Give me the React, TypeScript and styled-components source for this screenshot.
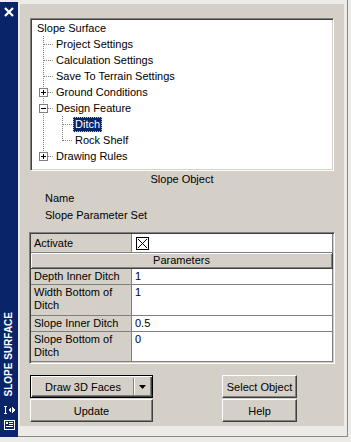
import React from 'react';
import styled, { createGlobalStyle } from 'styled-components';

const GlobalStyle = createGlobalStyle`
  html, body {
    margin: 0;
    padding: 0;
    background: #ecebe8;
  }
  body {
    font-family: 'Liberation Sans', Arial, sans-serif;
    font-size: 11px;
    color: #000;
  }
`;

const Window = styled.div`
  display: flex;
  width: 351px;
  height: 442px;
  background: #ecebe8;
  overflow: hidden;
`;

const Sidebar = styled.div`
  width: 18px;
  height: 435px;
  margin-top: 2px;
  padding: 3px 0 7px;
  box-sizing: border-box;
  background: #0a246a;
  display: flex;
  flex-direction: column;
  align-items: center;
`;

const Spacer = styled.div`
  flex: 1;
`;

const SideTitle = styled.div`
  writing-mode: vertical-rl;
  transform: rotate(180deg);
  color: #fff;
  font-weight: bold;
  font-size: 10px;
  line-height: 12px;
  margin-bottom: 9px;
`;

const SideIcon = styled.svg<{ $gap?: number }>`
  display: block;
  margin-top: ${(p) => p.$gap ?? 0}px;
`;

const Frame = styled.div`
  width: 330px;
  height: 437px;
  box-sizing: border-box;
  padding: 4px 3px 10px 2px;
  border-right: 1px solid #8a8986;
  border-bottom: 1px solid #8a8986;
  display: flex;
`;

const Panel = styled.div`
  flex: 1;
  background: #d4d0c8;
  display: flex;
  flex-direction: column;
`;

const TreeBox = styled.div`
  margin: 14px 0 0 10px;
  width: 304px;
  height: 153px;
  box-sizing: border-box;
  background: #fff;
  border: 1px solid;
  border-color: #808080 #fff #fff #808080;
  box-shadow: inset 1px 1px 0 #404040, inset -1px -1px 0 #d4d0c8;
  padding: 1px 0 0 4px;
  overflow: hidden;
`;

const TreeRow = styled.div`
  display: flex;
  align-items: center;
  height: 16px;
`;

const GuideSvg = styled.svg`
  display: block;
  flex: none;
`;

const TreeLabel = styled.span<{ $selected?: boolean }>`
  padding: 0 1px;
  line-height: 13px;
  border: 1px dotted ${(p) => (p.$selected ? '#c9c27a' : 'transparent')};
  background: ${(p) => (p.$selected ? '#0a246a' : 'transparent')};
  color: ${(p) => (p.$selected ? '#fff' : '#000')};
  white-space: nowrap;
`;

const Caption = styled.div<{ $center?: boolean; $top?: number }>`
  height: 16px;
  line-height: 16px;
  margin-top: ${(p) => p.$top ?? 0}px;
  padding-left: ${(p) => (p.$center ? 0 : 25)}px;
  text-align: ${(p) => (p.$center ? 'center' : 'left')};
`;

const Grid = styled.div`
  margin: 9px 0 0 9px;
  width: 306px;
  height: 132px;
  box-sizing: border-box;
  border: 1px solid;
  border-color: #808080 #fff #fff #808080;
  box-shadow: inset 1px 1px 0 #404040, inset -1px -1px 0 #d4d0c8;
  padding: 1px;
  display: flex;
  flex-direction: column;
  overflow: hidden;
`;

const GridRow = styled.div<{ $h?: number }>`
  display: grid;
  grid-template-columns: 101px 1fr;
  height: ${(p) => (p.$h ? `${p.$h}px` : 'auto')};
  flex: ${(p) => (p.$h ? 'none' : 1)};
  box-sizing: border-box;
  border-bottom: 1px solid #808080;
`;

const LabelCell = styled.div<{ $middle?: boolean }>`
  background: #d4d0c8;
  border-right: 1px solid #808080;
  padding: 1px 3px;
  line-height: 13px;
  display: flex;
  align-items: ${(p) => (p.$middle ? 'center' : 'flex-start')};
`;

const ValueCell = styled.div<{ $middle?: boolean }>`
  background: #fff;
  border-right: 1px solid #808080;
  padding: 1px 3px;
  line-height: 13px;
  display: flex;
  align-items: ${(p) => (p.$middle ? 'center' : 'flex-start')};
`;

const SectionRow = styled.div`
  height: 16px;
  flex: none;
  box-sizing: border-box;
  background: #d4d0c8;
  border-right: 1px solid #404040;
  border-bottom: 1px solid #404040;
  box-shadow: inset 1px 1px 0 #fff, inset -1px -1px 0 #808080;
  text-align: center;
  line-height: 15px;
`;

const CheckSvg = styled.svg`
  display: block;
  margin-left: 1px;
`;

const Buttons = styled.div`
  display: grid;
  grid-template-columns: 123px 75px;
  column-gap: 69px;
  row-gap: 1px;
  margin: 11px 0 0 10px;
`;

const Button = styled.div<{ $default?: boolean }>`
  height: 23px;
  box-sizing: border-box;
  background: #d4d0c8;
  display: flex;
  align-items: center;
  justify-content: center;
  border: 1px solid;
  border-color: ${(p) => (p.$default ? '#000' : '#fff #404040 #404040 #fff')};
  box-shadow: ${(p) =>
    p.$default
      ? 'inset 1px 1px 0 #fff, inset -1px -1px 0 #404040, inset -2px -2px 0 #808080'
      : 'inset -1px -1px 0 #808080'};
`;

const SplitMain = styled.div`
  flex: 1;
  text-align: center;
  padding-left: 2px;
`;

const SplitArrow = styled.div`
  width: 16px;
  align-self: stretch;
  margin: 2px 2px 2px 0;
  border-left: 1px solid #808080;
  box-shadow: inset 1px 0 0 #fff;
  display: flex;
  align-items: center;
  justify-content: center;
`;

type Guide = { line: 'full' | 'half' | 'none'; branch?: boolean; toggle?: '+' | '-' };

type TreeItem = { label: string; guides: Guide[]; selected?: boolean };

const treeItems: TreeItem[] = [
  { label: 'Slope Surface', guides: [] },
  { label: 'Project Settings', guides: [{ line: 'full', branch: true }] },
  { label: 'Calculation Settings', guides: [{ line: 'full', branch: true }] },
  { label: 'Save To Terrain Settings', guides: [{ line: 'full', branch: true }] },
  { label: 'Ground Conditions', guides: [{ line: 'full', branch: true, toggle: '+' }] },
  { label: 'Design Feature', guides: [{ line: 'full', branch: true, toggle: '-' }] },
  {
    label: 'Ditch',
    guides: [{ line: 'full' }, { line: 'full', branch: true }],
    selected: true,
  },
  { label: 'Rock Shelf', guides: [{ line: 'full' }, { line: 'half', branch: true }] },
  { label: 'Drawing Rules', guides: [{ line: 'half', branch: true, toggle: '+' }] },
];

const GuideCell = ({ line, branch, toggle }: Guide) => (
  <GuideSvg width={19} height={16} viewBox="0 0 19 16" shapeRendering="crispEdges">
    {line !== 'none' && (
      <line
        x1={8.5}
        y1={0}
        x2={8.5}
        y2={line === 'full' ? 16 : 9}
        stroke="#808080"
        strokeDasharray="1 1"
      />
    )}
    {branch && (
      <line x1={9} y1={8.5} x2={19} y2={8.5} stroke="#808080" strokeDasharray="1 1" />
    )}
    {toggle && (
      <>
        <rect x={4.5} y={4.5} width={8} height={8} fill="#fff" stroke="#808080" />
        <line x1={6} y1={8.5} x2={11} y2={8.5} stroke="#000" />
        {toggle === '+' && <line x1={8.5} y1={6} x2={8.5} y2={11} stroke="#000" />}
      </>
    )}
  </GuideSvg>
);

const params = [
  { label: ['Depth Inner Ditch'], value: '1', h: 16 },
  { label: ['Width Bottom of', 'Ditch'], value: '1', h: 31 },
  { label: ['Slope Inner Ditch'], value: '0.5', h: 16 },
  { label: ['Slope Bottom of', 'Ditch'], value: '0' },
];

const App = () => {
  return (
    <Window>
      <GlobalStyle />
      <Sidebar>
        <SideIcon width={10} height={10} viewBox="0 0 10 10" $gap={2}>
          <path d="M1 1 L9 9 M9 1 L1 9" stroke="#fff" strokeWidth={2.2} />
        </SideIcon>
        <Spacer />
        <SideTitle>SLOPE SURFACE</SideTitle>
        <SideIcon width={11} height={10} viewBox="0 0 11 10" shapeRendering="crispEdges">
          <rect x={0} y={1} width={3} height={1} fill="#fff" />
          <rect x={1} y={1} width={1} height={8} fill="#fff" />
          <rect x={0} y={8} width={3} height={1} fill="#fff" />
          <path d="M7 2 L4 5 L7 8 Z" fill="#fff" />
          <path d="M8 2 L11 5 L8 8 Z" fill="#fff" />
        </SideIcon>
        <SideIcon width={11} height={10} viewBox="0 0 11 10" shapeRendering="crispEdges" $gap={5}>
          <rect x={0.5} y={0.5} width={10} height={9} fill="none" stroke="#fff" />
          <rect x={2} y={2} width={2} height={2} fill="#fff" />
          <rect x={5} y={2} width={4} height={1} fill="#fff" />
          <rect x={5} y={4} width={4} height={1} fill="#fff" />
          <rect x={2} y={6} width={7} height={1} fill="#fff" />
        </SideIcon>
      </Sidebar>
      <Frame>
        <Panel>
          <TreeBox>
            {treeItems.map((item) => (
              <TreeRow key={item.label}>
                {item.guides.map((g, i) => (
                  <GuideCell key={i} {...g} />
                ))}
                <TreeLabel $selected={item.selected}>{item.label}</TreeLabel>
              </TreeRow>
            ))}
          </TreeBox>
          <Caption $center>Slope Object</Caption>
          <Caption $top={3}>Name</Caption>
          <Caption $top={1}>Slope Parameter Set</Caption>
          <Grid>
            <GridRow $h={19}>
              <LabelCell $middle>Activate</LabelCell>
              <ValueCell $middle>
                <CheckSvg width={13} height={13} viewBox="0 0 13 13">
                  <rect x={0.5} y={0.5} width={12} height={12} fill="#fff" stroke="#000" />
                  <path d="M2 2 L11 11 M11 2 L2 11" stroke="#000" strokeWidth={1} />
                </CheckSvg>
              </ValueCell>
            </GridRow>
            <SectionRow>Parameters</SectionRow>
            {params.map((p) => (
              <GridRow key={p.label.join(' ')} $h={p.h}>
                <LabelCell>
                  <div>
                    {p.label.map((l) => (
                      <div key={l}>{l}</div>
                    ))}
                  </div>
                </LabelCell>
                <ValueCell>{p.value}</ValueCell>
              </GridRow>
            ))}
          </Grid>
          <Buttons>
            <Button $default>
              <SplitMain>Draw 3D Faces</SplitMain>
              <SplitArrow>
                <svg width={7} height={4} viewBox="0 0 7 4">
                  <path d="M0 0 H7 L3.5 4 Z" fill="#000" />
                </svg>
              </SplitArrow>
            </Button>
            <Button>Select Object</Button>
            <Button>Update</Button>
            <Button>Help</Button>
          </Buttons>
        </Panel>
      </Frame>
    </Window>
  );
};

export default App;
